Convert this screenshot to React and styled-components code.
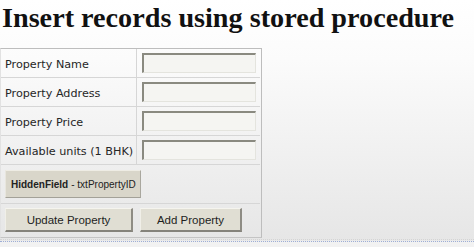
import styled, { createGlobalStyle } from 'styled-components'

const GlobalStyle = createGlobalStyle`
    html, body {
        margin: 0;
        padding: 0;
        background: #f3f3f3;
    }
`

const Page = styled.div`
    width: 474px;
    height: 247px;
    overflow: hidden;
    background: linear-gradient(#ffffff 0px, #fbfbfb 60px, #e6e6e6 240px, #f2f2f2 242px);
`

const Title = styled.h1`
    margin: 0 0 14px 0;
    padding: 2px 0 0 2px;
    font-family: 'Liberation Serif', 'Times New Roman', serif;
    font-weight: bold;
    font-size: 28.2px;
    line-height: 32px;
    color: #111;
    white-space: nowrap;
`

const FormGrid = styled.div`
    display: grid;
    grid-template-columns: 136px 123px;
    width: 260px;
    border: 1px solid #bdbdbd;
    border-left-color: #e2e2e2;
    border-bottom-color: #c4c4c4;
`

const Label = styled.div`
    height: 29px;
    padding: 2px 0 0 4px;
    box-sizing: border-box;
    display: flex;
    align-items: center;
    border-bottom: 1px solid #d6d6d6;
    border-right: 1px solid #d6d6d6;
    font-family: 'DejaVu Sans', Verdana, sans-serif;
    font-size: 11.2px;
    color: #262626;
    white-space: nowrap;
`

const InputCell = styled.div`
    height: 29px;
    padding: 4px 0 0 5px;
    box-sizing: border-box;
    border-bottom: 1px solid #d6d6d6;
`

const TextBox = styled.input`
    display: block;
    width: 114px;
    height: 20px;
    box-sizing: border-box;
    margin: 0;
    padding: 0;
    background: #f5f5f2;
    border-style: solid;
    border-width: 2px 1px 1px 2px;
    border-color: #8a8a80 #e4e4de #e4e4de #8a8a80;
    outline: none;
`

const WideCell = styled.div`
    grid-column: 1 / 3;
    height: ${({ $height }) => $height}px;
    padding: ${({ $top }) => $top}px 0 0 4px;
    box-sizing: border-box;
    display: flex;
    gap: 7px;
    border-bottom: ${({ $last }) => ($last ? 'none' : '1px solid #d6d6d6')};
`

const HiddenField = styled.div`
    width: 136px;
    height: 28px;
    box-sizing: border-box;
    display: flex;
    align-items: center;
    padding-left: 5px;
    background: #d9d6ca;
    border: 1px solid;
    border-color: #eeece4 #a9a79e #a3a198 #e8e6de;
    font-family: 'Liberation Sans', Arial, sans-serif;
    font-size: 10px;
    color: #222;
    white-space: nowrap;

    & > b {
        margin-right: 3px;
    }
`

const Button = styled.button`
    width: ${({ $width }) => $width}px;
    height: 24px;
    margin: 0;
    padding: 0;
    box-sizing: border-box;
    background: #e0ded3;
    border: 1px solid;
    border-width: 1px 2px 2px 1px;
    border-color: #f5f4ee #8e8c84 #85837b #f0efe8;
    font-family: 'Liberation Sans', Arial, sans-serif;
    font-size: 11.5px;
    color: #1e1e1e;
`

const Footer = styled.div`
    margin-top: 1px;
    height: 1px;
    border-top: 1px dotted #d4d4d4;
    border-bottom: 1px dotted #9eaed6;
`

const fields = [
    'Property Name',
    'Property Address',
    'Property Price',
    'Available units (1 BHK)',
]

function App() {
    return (
        <>
            <GlobalStyle />
            <Page>
                <Title>Insert records using stored procedure</Title>
                <FormGrid>
                    {fields.map((field) => [
                        <Label key={`label-${field}`}>{field}</Label>,
                        <InputCell key={`input-${field}`}>
                            <TextBox type="text" />
                        </InputCell>,
                    ])}
                    <WideCell $height={39} $top={5}>
                        <HiddenField>
                            <b>HiddenField</b> - txtPropertyID
                        </HiddenField>
                    </WideCell>
                    <WideCell $height={33} $top={4} $last>
                        <Button $width={128}>Update Property</Button>
                        <Button $width={102}>Add Property</Button>
                    </WideCell>
                </FormGrid>
                <Footer />
            </Page>
        </>
    )
}

export default App
